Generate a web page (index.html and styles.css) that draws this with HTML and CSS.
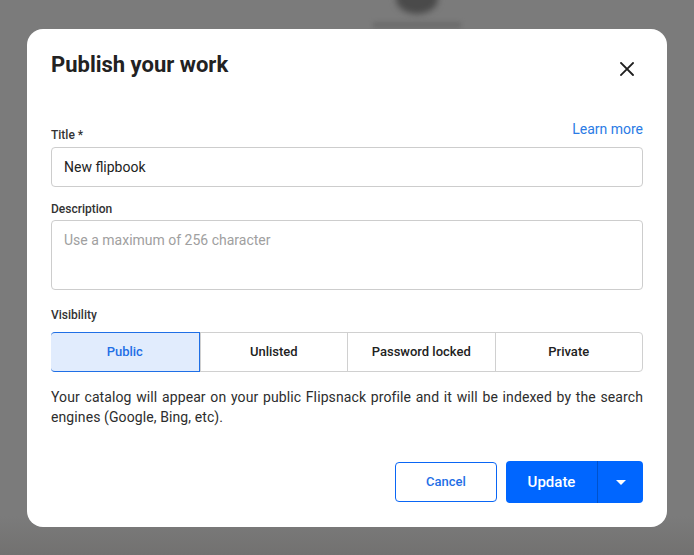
FILE: index.html
```html
<!DOCTYPE html>
<html lang="en">
<head>
<meta charset="utf-8">
<title>Publish your work</title>
<link rel="stylesheet" href="styles.css">
</head>
<body>
<div class="page">
  <div class="page-col">
    <div class="avatar"></div>
    <div class="avatar-name"></div>
  </div>
</div>
<div class="overlay">
  <div class="modal" role="dialog" aria-labelledby="modal-title">
    <div class="modal-head">
      <h1 id="modal-title" class="modal-title">Publish your work</h1>
      <button class="close" aria-label="Close">
        <svg width="14" height="14" viewBox="0 0 14 14"><path d="M1 1L13 13M13 1L1 13" stroke="#1f1f1f" stroke-width="1.8" fill="none" stroke-linecap="square"/></svg>
      </button>
    </div>
    <div class="field field-title">
      <div class="label-row">
        <label class="label">Title *</label>
        <a class="learn" href="#">Learn more</a>
      </div>
      <div class="input">New flipbook</div>
    </div>
    <div class="field field-desc">
      <label class="label">Description</label>
      <div class="textarea">Use a maximum of 256 character</div>
    </div>
    <div class="field field-vis">
      <label class="label">Visibility</label>
      <div class="segments">
        <div class="seg seg-active">Public</div>
        <div class="seg">Unlisted</div>
        <div class="seg">Password locked</div>
        <div class="seg">Private</div>
      </div>
    </div>
    <p class="note">Your catalog will appear on your public Flipsnack profile and it will be indexed by the search engines (Google, Bing, etc).</p>
    <div class="footer">
      <button class="btn-cancel">Cancel</button>
      <div class="split">
        <button class="btn-update">Update</button>
        <button class="btn-caret" aria-label="More options">
          <svg width="10" height="5" viewBox="0 0 10 5"><path d="M0 0H10L5 5Z" fill="#fff"/></svg>
        </button>
      </div>
    </div>
  </div>
</div>
</body>
</html>
```
FILE: styles.css
```css
* { box-sizing: border-box; }
html, body { margin: 0; padding: 0; }
body {
  width: 694px;
  height: 555px;
  overflow: hidden;
  font-family: Roboto, "Liberation Sans", Arial, sans-serif;
  background: #7b7b7b;
}
.page {
  height: 555px;
  display: flex;
  justify-content: center;
}
.page-col {
  width: 100%;
  height: 100%;
  background: linear-gradient(180deg, #7b7b7b 0%, #7b7b7b 93%, #727170 100%);
  display: flex;
  flex-direction: column;
  align-items: center;
  padding-left: 140px;
}
.avatar {
  width: 42px;
  height: 30px;
  margin-top: -16px;
  border-radius: 50%;
  background: #4a4a4a;
  filter: blur(3px);
}
.avatar-name {
  width: 88px;
  height: 6px;
  margin-top: 8px;
  background: #6c6c6c;
  filter: blur(2px);
}
.overlay {
  position: fixed;
  inset: 0;
  display: flex;
  align-items: center;
  justify-content: center;
}
.modal {
  width: 640px;
  height: 498px;
  background: #fff;
  border-radius: 16px;
  padding: 24px 24px 24px 24px;
  display: flex;
  flex-direction: column;
}
.modal-head {
  display: flex;
  justify-content: space-between;
  align-items: flex-start;
  height: 24px;
}
.modal-title {
  margin: 0;
  font-size: 22px;
  line-height: 24px;
  font-weight: 700;
  color: #222;
}
.close {
  border: 0;
  background: none;
  padding: 0;
  margin: 9px 9px 0 0;
  width: 14px;
  height: 14px;
  display: block;
  cursor: pointer;
}
.close svg { display: block; }
.field { display: flex; flex-direction: column; }
.field-title { margin-top: 44px; }
.field-desc { margin-top: 14px; }
.field-vis { margin-top: 17px; }
.label-row {
  display: flex;
  justify-content: space-between;
  align-items: flex-end;
}
.label {
  font-size: 12px;
  line-height: 16px;
  font-weight: 500;
  color: #333;
  margin-bottom: 4px;
}
.field-desc .label { margin-bottom: 3px; }
.field-vis .label { margin-bottom: 9px; }
.learn {
  font-size: 14px;
  line-height: 16px;
  color: #2b7be5;
  text-decoration: none;
  margin-bottom: 10px;
}
.input {
  height: 40px;
  border: 1px solid #cdcdcd;
  border-radius: 4px;
  padding: 0 12px;
  font-size: 14px;
  line-height: 38px;
  color: #222;
}
.textarea {
  height: 70px;
  border: 1px solid #cdcdcd;
  border-radius: 4px;
  padding: 10px 12px;
  font-size: 14px;
  line-height: 18px;
  color: #a0a0a0;
}
.segments {
  display: grid;
  grid-template-columns: repeat(4, 1fr);
  height: 40px;
  border: 1px solid #d0d0d0;
  border-radius: 4px;
}
.seg {
  display: flex;
  align-items: center;
  justify-content: center;
  font-size: 13px;
  font-weight: 500;
  color: #222;
  border-left: 1px solid #d0d0d0;
}
.seg:first-child { border-left: 0; }
.seg-active {
  background: #e1ecfd;
  color: #1f6fe6;
  margin: -1px 0 -1px -1px;
  border: 1px solid #1f6fe6;
  border-radius: 4px 0 0 4px;
}
.note {
  margin: 15px 0 0 0;
  font-size: 14px;
  line-height: 20px;
  color: #2d2d2d;
  text-align: justify;
  letter-spacing: 0.1px;
}
.footer {
  margin-top: auto;
  display: flex;
  justify-content: flex-end;
  align-items: center;
  gap: 9px;
}
.btn-cancel {
  width: 102px;
  height: 40px;
  border: 1px solid #0a66f5;
  border-radius: 4px;
  background: #fff;
  color: #1f6fe6;
  font-family: inherit;
  font-size: 13px;
  font-weight: 500;
  padding: 0;
}
.split {
  display: flex;
  height: 42px;
  background: #0066ff;
  border-radius: 4px;
}
.btn-update {
  width: 92px;
  border: 0;
  background: none;
  color: #fff;
  font-family: inherit;
  font-size: 15px;
  font-weight: 500;
  padding: 0;
  border-right: 1px solid #0052cc;
}
.btn-caret {
  width: 45px;
  border: 0;
  background: none;
  padding: 0;
  display: flex;
  align-items: center;
  justify-content: center;
}
.btn-caret svg { display: block; margin-top: 1px; }
```
